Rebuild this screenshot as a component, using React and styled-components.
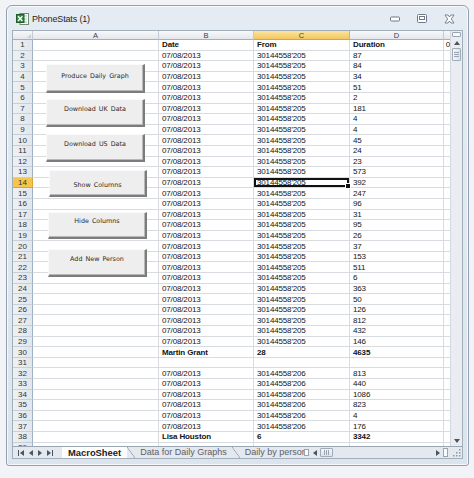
import React from 'react';
import styled, { createGlobalStyle } from 'styled-components';

const Global = createGlobalStyle`
  html, body { margin: 0; padding: 0; }
  body {
    width: 474px; height: 478px; overflow: hidden;
    background: #f1f3f6;
    font-family: "Liberation Sans", Arial, sans-serif;
  }
`;

const Desk = styled.div`
  width: 474px; height: 478px; box-sizing: border-box;
  padding: 5px 5px 12px 6px;
  background: #f1f3f6;
`;

const Win = styled.div`
  height: 100%; box-sizing: border-box;
  display: flex; flex-direction: column;
  background: linear-gradient(#e4ebf3, #dce4ed);
  border: 1px solid #93a0b0;
  border-radius: 6px 6px 3px 3px;
  padding: 0 5px 6px 5px;
  box-shadow: inset 0 0 0 1px rgba(255,255,255,0.7);
`;

const TitleBar = styled.div`
  height: 23px; flex: none;
  display: flex; align-items: center;
  padding: 1px 0 0 4px;
`;

const TitleText = styled.span`
  margin-left: 3px;
  font-family: "Liberation Sans", Arial, sans-serif;
  font-size: 9px; letter-spacing: -0.15px;
  color: #1f1f1f;
`;

const Controls = styled.div`
  margin-left: auto; margin-right: 8px;
  display: flex; align-items: center; gap: 17px;
`;

const Client = styled.div`
  flex: 1; min-height: 0;
  display: grid;
  grid-template-columns: 1fr 12px;
  grid-template-rows: 1fr 12px;
  background: #fff;
  border: 1px solid #a3aebb;
  overflow: hidden;
`;

const Sheet = styled.div`
  position: relative; overflow: hidden;
  display: grid;
  grid-template-columns: 20px 126px 95px 96px 94px 7px;
  grid-template-rows: 9px;
  grid-auto-rows: 10.6px;
`;

const Corner = styled.div`
  position: relative; box-sizing: border-box;
  background: linear-gradient(#f6f7f9, #e4e8ed);
  border-right: 1px solid #c3cbd5; border-bottom: 1px solid #9eb0c3;
  &::after {
    content: ''; position: absolute; right: 1px; bottom: 1px;
    border-left: 4px solid transparent; border-bottom: 4px solid #c9cfd6;
  }
`;

const ColHead = styled.div`
  box-sizing: border-box;
  display: flex; align-items: center; justify-content: center;
  font-size: 7.5px; line-height: 9px; color: #3a3f46;
  background: ${p => p.$active ? 'linear-gradient(#fbe4a0, #f4c75e)' : 'linear-gradient(#f7f8fa, #e3e7ec)'};
  border-right: 1px solid ${p => p.$active ? '#e2b24a' : '#c3cbd5'};
  border-bottom: 1px solid ${p => p.$active ? '#d9a43a' : '#9eb0c3'};
  overflow: hidden;
`;

const RowHead = styled.div`
  box-sizing: border-box;
  display: flex; align-items: center; justify-content: center;
  font-size: 8px; color: #2f353c;
  background: ${p => p.$active ? '#f6c54c' : 'linear-gradient(to right, #eef1f4, #e2e7ec)'};
  border-right: 1px solid ${p => p.$active ? '#d9a43a' : '#9eb0c3'};
  border-bottom: 1px solid ${p => p.$active ? '#d9a43a' : '#c7d0da'};
`;

const Cell = styled.div`
  position: relative; box-sizing: border-box;
  display: flex; align-items: center;
  justify-content: ${p => p.$right ? 'flex-end' : 'flex-start'};
  padding: ${p => p.$right ? '0' : '0 2px 0 3px'};
  font-size: 8px; letter-spacing: -0.15px;
  font-weight: ${p => p.$bold ? 700 : 400};
  color: #141414;
  white-space: nowrap; overflow: visible;
  border-right: 1px solid #d8dce1;
  border-bottom: 1px solid #d8dce1;
  ${p => p.$selected && `
    box-shadow: inset 0 0 0 2px #111;
    z-index: 2;
    &::after {
      content: ''; position: absolute; right: -2px; bottom: -2px;
      width: 4px; height: 4px; background: #111; border: 1px solid #fff;
    }
  `}
`;

const MacroButton = styled.div`
  position: absolute; box-sizing: border-box;
  left: ${p => p.$x}px; top: ${p => p.$y}px;
  width: ${p => p.$w}px; height: ${p => p.$h}px;
  padding-top: ${p => p.$pt}px;
  display: flex; justify-content: center; align-items: flex-start;
  background: #eeeeee;
  border-top: 1px solid #fafafa; border-left: 1px solid #fafafa;
  border-right: 2px solid #7c7c7c; border-bottom: 2px solid #7c7c7c;
  box-shadow: inset -1px -1px 0 #b8b8b8;
  font-family: "DejaVu Sans", Tahoma, sans-serif;
  font-size: 6.4px; color: #2b2b2b; word-spacing: 1px;
  z-index: 3;
`;

const VScroll = styled.div`
  display: flex; flex-direction: column;
  background: #e9ecf0;
  border-left: 1px solid #d4d9df;
`;

const SplitBox = styled.div`
  height: 5px; margin: 1px 1px 2px; box-sizing: border-box;
  border: 1px solid #9aa5b1; border-radius: 1px;
  background: #f7f8fa;
`;

const Arrow = styled.div`
  flex: none; height: ${p => p.$h || 9}px;
  display: flex; align-items: center; justify-content: center;
`;

const VThumb = styled.div`
  height: 13px; margin: 1px 1px 0; box-sizing: border-box;
  border: 1px solid #a2acb8; border-radius: 1px;
  background: linear-gradient(to right, #f4f6f8, #dde2e8);
  display: flex; align-items: center; justify-content: center;
  &::after { content: ''; width: 5px; height: 5px; background: repeating-linear-gradient(#9aa4b0 0 1px, transparent 1px 2px); }
`;

const Track = styled.div`
  flex: 1;
`;

const TabBar = styled.div`
  display: flex; align-items: stretch;
  background: #e4e9ef;
  border-top: 1px solid #9aa6b4;
  overflow: hidden;
`;

const NavBox = styled.div`
  width: 45px; flex: none;
  display: flex; align-items: center; justify-content: space-around;
  padding: 0 2px; box-sizing: border-box;
`;

const TabsArea = styled.div`
  width: 246px; flex: none; overflow: hidden;
  display: flex; align-items: stretch;
  white-space: nowrap;
`;

const Tab = styled.div`
  position: relative; flex: none;
  display: flex; align-items: center;
  padding: 0 ${p => p.$active ? 6 : 5}px;
  margin-left: ${p => p.$first ? 4 : 0}px;
  font-size: ${p => p.$active ? '9.4px' : '9px'};
  font-weight: ${p => p.$active ? 700 : 400};
  color: ${p => p.$active ? '#1b1b1b' : '#5b6068'};
  background: ${p => p.$active ? '#ffffff' : 'transparent'};
  line-height: 11px;
`;

const Slant = styled.span`
  flex: none; width: 8px;
  background: linear-gradient(to top right, transparent calc(50% - 0.6px), #8f99a5 50%, transparent calc(50% + 0.6px));
`;

const Splitter = styled.div`
  width: 5px; flex: none; margin: 2px 4px 2px 0; box-sizing: border-box;
  border: 1px solid #9aa5b1; background: #fafbfc;
`;

const HScroll = styled.div`
  flex: 1; display: flex; align-items: center;
  padding-right: 2px;
`;

const HThumb = styled.div`
  width: 13px; height: 9px; margin-left: 3px; box-sizing: border-box;
  border: 1px solid #a2acb8; border-radius: 1px;
  background: linear-gradient(#f4f6f8, #dde2e8);
  display: flex; align-items: center; justify-content: center;
  &::after { content: ''; width: 5px; height: 5px; background: repeating-linear-gradient(to right, #9aa4b0 0 1px, transparent 1px 2px); }
`;

const HSplit = styled.div`
  width: 5px; height: 9px; margin-left: 3px; box-sizing: border-box;
  border: 1px solid #9aa5b1; background: #fafbfc;
`;

const Grip = styled.div`
  background: #e4e9ef;
  border-top: 1px solid #9aa6b4;
  display: flex; align-items: flex-end; justify-content: flex-end;
  padding: 0 1px 1px 0;
`;

const Tri = ({ dir, bar }) => {
  const pts = dir === 'left' ? '4,0 4,6 0,3' : '0,0 0,6 4,3';
  return (
    <svg width={bar ? 6 : 4} height="6" viewBox={bar ? (dir === 'left' ? '-2 0 6 6' : '0 0 6 6') : '0 0 4 6'}>
      {bar && dir === 'left' && <rect x="-2" y="0" width="1" height="6" fill="#4d5560" />}
      <polygon points={pts} fill="#4d5560" />
      {bar && dir === 'right' && <rect x="5" y="0" width="1" height="6" fill="#4d5560" />}
    </svg>
  );
};

const ExcelIcon = () => (
  <svg width="13" height="12" viewBox="0 0 13 12">
    <rect x="4" y="0.5" width="8.5" height="11" fill="#fff" stroke="#6e8a74" />
    <line x1="6" y1="3" x2="11" y2="3" stroke="#9fbfa6" />
    <line x1="6" y1="6" x2="11" y2="6" stroke="#9fbfa6" />
    <line x1="6" y1="9" x2="11" y2="9" stroke="#9fbfa6" />
    <rect x="0.5" y="1.5" width="7.5" height="8" fill="#2f8a3f" stroke="#1d5e2a" />
    <path d="M2 3.2 L6.4 8 M6.4 3.2 L2 8" stroke="#fff" strokeWidth="1.3" />
  </svg>
);

const MinIcon = () => (
  <svg width="10" height="6" viewBox="0 0 10 6">
    <rect x="0.5" y="1" width="9" height="4" rx="1" fill="#fff" stroke="#6d7988" />
  </svg>
);
const MaxIcon = () => (
  <svg width="10" height="9" viewBox="0 0 10 9">
    <rect x="0.5" y="0.5" width="9" height="8" rx="1" fill="#fff" stroke="#6d7988" />
    <rect x="2.5" y="2.5" width="5" height="3" fill="#fff" stroke="#6d7988" />
  </svg>
);
const CloseIcon = () => (
  <svg width="11" height="10" viewBox="0 0 11 10">
    <path d="M1 1 L4 1 L5.5 3 L7 1 L10 1 L7.3 5 L10 9 L7 9 L5.5 7 L4 9 L1 9 L3.7 5 Z" fill="#fff" stroke="#6d7988" strokeWidth="0.9" strokeLinejoin="round" />
  </svg>
);

const GripIcon = () => (
  <svg width="8" height="8" viewBox="0 0 8 8">
    {[[6, 0], [3, 3], [6, 3], [0, 6], [3, 6], [6, 6]].map(([x, y], i) => (
      <rect key={i} x={x} y={y} width="1.5" height="1.5" fill="#8e99a6" />
    ))}
  </svg>
);

const d1 = [87, 84, 34, 51, 2, 181, 4, 4, 45, 24, 23, 573, 392, 247, 96, 31, 95, 26, 37, 153, 511, 6, 363, 50, 126, 812, 432, 146];
const d2 = [813, 440, 1086, 823, 4, 176];

const rows = [];
rows.push({ b: 'Date', c: 'From', d: 'Duration', e: '0', bold: true });
d1.forEach(v => rows.push({ b: '07/08/2013', c: "30144558'205", d: String(v) }));
rows.push({ b: 'Martin Grant', c: '28', d: '4635', bold: true });
rows.push({});
d2.forEach(v => rows.push({ b: '07/08/2013', c: "30144558'206", d: String(v) }));
rows.push({ b: 'Lisa Houston', c: '6', d: '3342', bold: true });
rows.push({});

const buttons = [
  { label: 'Produce  Daily Graph', x: 33, y: 33, w: 99, h: 29, pt: 7 },
  { label: 'Download  UK Data', x: 33, y: 68, w: 99, h: 28, pt: 5 },
  { label: 'Download  US Data', x: 33, y: 103, w: 99, h: 28, pt: 5 },
  { label: 'Show Columns', x: 36, y: 139, w: 98, h: 27, pt: 10 },
  { label: 'Hide Columns', x: 35, y: 181, w: 99, h: 27, pt: 4 },
  { label: 'Add New Person', x: 35, y: 218, w: 99, h: 28, pt: 5 },
];

export default function App() {
  return (
    <>
      <Global />
      <Desk>
        <Win>
          <TitleBar>
            <ExcelIcon />
            <TitleText>PhoneStats (1)</TitleText>
            <Controls>
              <MinIcon />
              <MaxIcon />
              <CloseIcon />
            </Controls>
          </TitleBar>
          <Client>
            <Sheet>
              <Corner />
              {['A', 'B', 'C', 'D', ''].map((l, i) => (
                <ColHead key={i} $active={l === 'C'}>{l}</ColHead>
              ))}
              {rows.map((r, i) => {
                const n = i + 1;
                return (
                  <React.Fragment key={n}>
                    <RowHead $active={n === 14}>{n}</RowHead>
                    <Cell />
                    <Cell $bold={r.bold}>{r.b}</Cell>
                    <Cell $bold={r.bold} $selected={n === 14}>{r.c}</Cell>
                    <Cell $bold={r.bold}>{r.d}</Cell>
                    <Cell $right>{r.e}</Cell>
                  </React.Fragment>
                );
              })}
              {buttons.map(b => (
                <MacroButton key={b.label} $x={b.x} $y={b.y} $w={b.w} $h={b.h} $pt={b.pt}>
                  {b.label}
                </MacroButton>
              ))}
            </Sheet>
            <VScroll>
              <SplitBox />
              <Arrow $h={8}>
                <svg width="6" height="4" viewBox="0 0 6 4"><polygon points="0,4 6,4 3,0" fill="#4d5560" /></svg>
              </Arrow>
              <VThumb />
              <Track />
              <Arrow $h={10}>
                <svg width="6" height="4" viewBox="0 0 6 4"><polygon points="0,0 6,0 3,4" fill="#4d5560" /></svg>
              </Arrow>
            </VScroll>
            <TabBar>
              <NavBox>
                <Tri dir="left" bar />
                <Tri dir="left" />
                <Tri dir="right" />
                <Tri dir="right" bar />
              </NavBox>
              <TabsArea>
                <Tab $active $first>MacroSheet</Tab>
                <Slant />
                <Tab>Data for Daily Graphs</Tab>
                <Slant />
                <Tab>Daily by person</Tab>
              </TabsArea>
              <Splitter />
              <HScroll>
                <Tri dir="left" />
                <HThumb />
                <Track />
                <Tri dir="right" />
                <HSplit />
              </HScroll>
            </TabBar>
            <Grip><GripIcon /></Grip>
          </Client>
        </Win>
      </Desk>
    </>
  );
}
